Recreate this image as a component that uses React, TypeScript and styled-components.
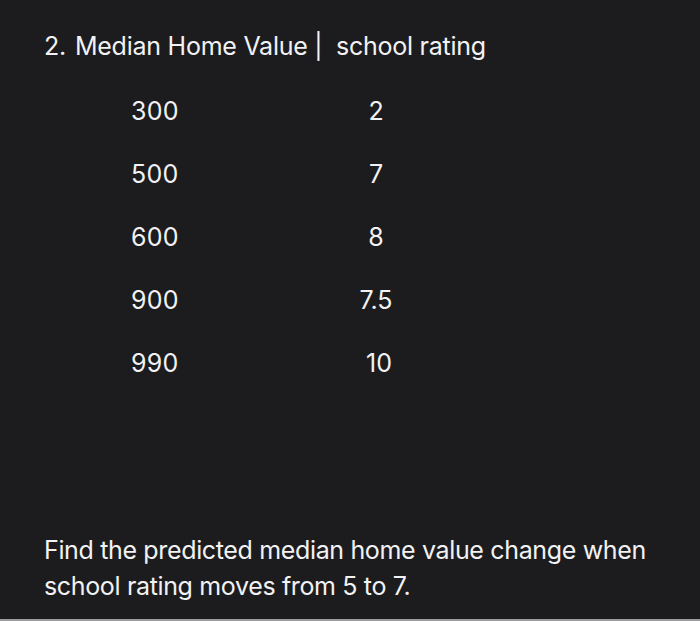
import styled, { createGlobalStyle } from 'styled-components';

const GlobalStyle = createGlobalStyle`
  body {
    margin: 0;
    background: #1c1c1e;
    font-family: Inter, 'Noto Sans', sans-serif;
    color: #f2f2f4;
  }
`;

const rows = [
  { value: '300', rating: '2' },
  { value: '500', rating: '7' },
  { value: '600', rating: '8' },
  { value: '900', rating: '7.5' },
  { value: '990', rating: '10', shift: 6 },
];

export default function App() {
  return (
    <>
      <GlobalStyle />
      <StyledPage>
        <StyledTitle>
          <StyledNumber>2.</StyledNumber>Median Home Value | &nbsp;school rating
        </StyledTitle>
        <StyledTable>
          {rows.map((row) => (
            <StyledRow key={row.value}>
              <StyledValue>{row.value}</StyledValue>
              <StyledRating $shift={row.shift ?? 0}>{row.rating}</StyledRating>
            </StyledRow>
          ))}
        </StyledTable>
        <StyledQuestion>
          Find the predicted median home value change when school rating moves
          from 5 to 7.
        </StyledQuestion>
      </StyledPage>
    </>
  );
}

const StyledPage = styled.main`
  box-sizing: border-box;
  display: flex;
  flex-direction: column;
  height: 621px;
  padding: 31px 44px 0;
  border-bottom: 2px solid #9c9c9e;
`;

const StyledTitle = styled.h1`
  margin: 0;
  font-size: 25px;
  font-weight: 400;
  line-height: 30px;
  letter-spacing: -0.25px;
`;

const StyledNumber = styled.span`
  margin-right: 9px;
`;

const StyledTable = styled.div`
  display: flex;
  flex-direction: column;
  gap: 33px;
  margin: 35px 0 0 87px;
`;

const StyledRow = styled.div`
  display: grid;
  grid-template-columns: 220px 50px;
  align-items: center;
  height: 30px;
`;

const StyledValue = styled.span`
  font-size: 25px;
  line-height: 30px;
  letter-spacing: 0.3px;
`;

const StyledRating = styled.span<{ $shift: number }>`
  font-size: 25px;
  line-height: 30px;
  text-align: center;
  padding-left: ${(p) => p.$shift}px;
`;

const StyledQuestion = styled.p`
  margin: auto 0 15px;
  max-width: 612px;
  font-size: 25px;
  line-height: 36px;
  letter-spacing: -0.35px;
`;
